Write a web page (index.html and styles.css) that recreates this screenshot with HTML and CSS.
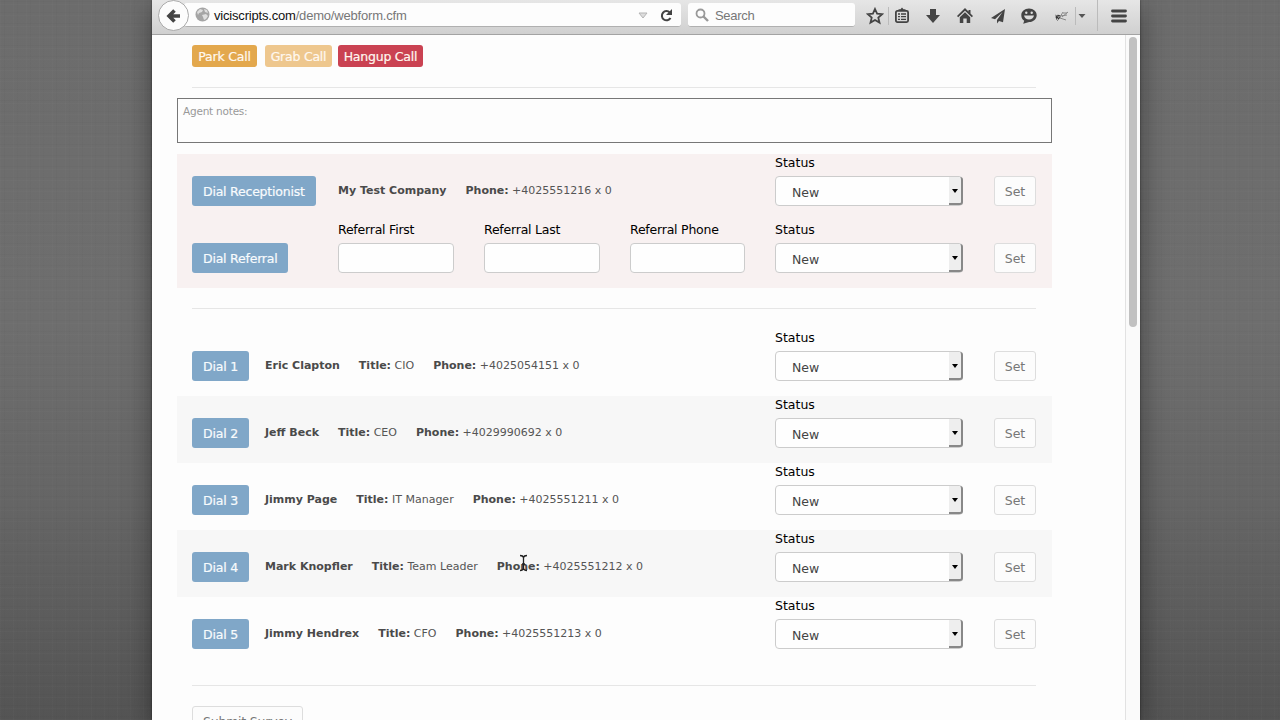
FILE: index.html
```html
<!DOCTYPE html>
<html lang="en">

<head>
  <meta charset="UTF-8">
  <meta name="viewport" content="width=device-width, initial-scale=1.0">
  <title>Webform</title>
  <link rel="stylesheet" href="styles.css">
</head>

<body>
  <div class="window">
    <div class="toolbar">
      <div class="back">
        <svg width="16" height="16" viewBox="0 0 16 16"><path d="M8.500 2.500 3 8l5.500 5.500M3.500 8H14" fill="none" stroke="#444" stroke-width="3.600" /></svg>
      </div>
      <div class="url">
        <svg class="globe" width="15" height="15" viewBox="0 0 15 15">
          <circle cx="7.500" cy="7.500" r="7" fill="#a5a5a5" />
          <path d="M2 5 5 2l3 1-1 2-3 1-1 2zM9 2l3 1 1 3-3-1zM7 8l4-1 2 2-2 3-2 1-1-3z" fill="#dedede" />
        </svg>
        <span class="address"><b>viciscripts.com</b>/demo/webform.cfm</span>
        <svg class="history" width="10" height="7" viewBox="0 0 10 7"><path d="M1 1h8L5 6z" fill="#ddd" stroke="#b5b5b5" /></svg>
        <svg class="reload" width="13" height="13" viewBox="0 0 13 13">
          <path d="M9.800 3.500A4.600 4.600 0 1 0 10.500 9" fill="none" stroke="#444" stroke-width="2" />
          <path d="M12 0v6H6z" fill="#444" />
        </svg>
      </div>
      <div class="search">
        <svg width="14" height="14" viewBox="0 0 14 14"><circle cx="5.500" cy="5.500" r="4" fill="none" stroke="#999" stroke-width="1.800" /><path d="m8.500 8.500 4.500 4.500" stroke="#999" stroke-width="2.400" /></svg>
        <span>Search</span>
      </div>
      <div class="icons">
        <svg width="18" height="18" viewBox="0 0 18 18"><path d="m9 2 2.100 4.700 5.100.5-3.900 3.400 1.200 5L9 13l-4.500 2.600 1.200-5-3.900-3.400 5.100-.5z" fill="none" stroke="#444" stroke-width="1.800" /></svg>
        <i class="sep"></i>
        <svg width="16" height="18" viewBox="0 0 16 18"><rect x="1.900" y="3.900" width="12.200" height="11.200" rx="1.500" fill="none" stroke="#444" stroke-width="1.800" /><path d="M4.500 4V2.300h2L8 .5l1.500 1.800h2V4z" fill="#444" /><path d="M4 7h2m1 0h5M4 9.700h2m1 0h5M4 12.400h2m1 0h5" stroke="#444" stroke-width="1.300" /></svg>
        <svg class="download" width="16" height="18" viewBox="0 0 16 18"><path d="M5 2h6v6h4l-7 8-7-8h4z" fill="#444" /></svg>
        <svg class="home" width="18" height="18" viewBox="0 0 18 18"><path d="M9 1 1 9l1.200 1.200L9 3.800l6.800 6.400L17 9l-2.500-2.500V3h-2v1.500z" fill="#444" /><path d="m9 5.300 5.200 5V16h-3.500v-4.500H7.300V16H3.800v-5.700z" fill="#444" /></svg>
        <svg class="plane" width="16" height="18" viewBox="0 0 16 18"><path d="M15 2 1 11l4 1.300L12.500 5 7 13v3.500L9 14l4 1.300z" fill="#444" /></svg>
        <svg class="smiley" width="18" height="18" viewBox="0 0 18 18"><path d="M9 1.500c4.500 0 7.700 3 7.700 6.700S13.500 15 9.200 15l-6 1.800 1-3C2.400 12.600 1.300 10.500 1.300 8.200 1.300 4.500 4.500 1.500 9 1.500z" fill="#444" /><circle cx="6.300" cy="5.800" r="1.200" fill="#ddd" /><circle cx="11.700" cy="5.800" r="1.200" fill="#ddd" /><path d="M4 8.500h10q-1 4-5 4t-5-4z" fill="#ddd" /></svg>
        <svg class="bug" width="16" height="14" viewBox="0 0 16 14"><ellipse cx="4" cy="8" rx="2.500" ry="2.200" fill="#333" /><path d="M1 6 6 8l3-5M2 11l4-4 7-1M3 12l3-3 6 2M8 8l6-5M9 4h4" fill="none" stroke="#888" stroke-width="1" /></svg>
        <i class="sep bug-sep"></i>
        <svg class="caret" width="8" height="6" viewBox="0 0 8 6"><path d="M.5 1h7L4 5z" fill="#555" /></svg>
        <i class="sep menu-sep"></i>
        <svg class="menu" width="16" height="14" viewBox="0 0 16 14"><path d="M1.500 2h13m-13 5h13m-13 5h13" stroke="#444" stroke-width="2.800" stroke-linecap="round" /></svg>
      </div>
    </div>

    <div class="viewport">
      <div class="page">
        <div class="calls">
          <button class="btn-sm park">Park Call</button>
          <button class="btn-sm grab">Grab Call</button>
          <button class="btn-sm hangup">Hangup Call</button>
        </div>
        <hr>
        <div class="notes">Agent notes:</div>

        <div class="company">
          <div class="row">
            <div class="who wide">
              <button class="btn">Dial Receptionist</button>
              <p class="info"><b>My Test Company</b><span><b>Phone:</b> +4025551216 x 0</span></p>
            </div>
            <div class="status"><label>Status</label><div class="select">New<i></i></div></div>
            <button class="btn set">Set</button>
          </div>
          <div class="row">
            <div class="who wide">
              <button class="btn">Dial Referral</button>
              <div class="field"><label>Referral First</label><input type="text"></div>
              <div class="field"><label>Referral Last</label><input type="text"></div>
              <div class="field"><label>Referral Phone</label><input type="text"></div>
            </div>
            <div class="status"><label>Status</label><div class="select">New<i></i></div></div>
            <button class="btn set">Set</button>
          </div>
        </div>
        <hr class="mid">

        <div class="contacts">
          <div class="row">
            <div class="who">
              <button class="btn dial">Dial 1</button>
              <p class="info"><b>Eric Clapton</b><span><b>Title:</b> CIO</span><span><b>Phone:</b> +4025054151 x 0</span></p>
            </div>
            <div class="status"><label>Status</label><div class="select">New<i></i></div></div>
            <button class="btn set">Set</button>
          </div>
          <div class="row">
            <div class="who">
              <button class="btn dial">Dial 2</button>
              <p class="info"><b>Jeff Beck</b><span><b>Title:</b> CEO</span><span><b>Phone:</b> +4029990692 x 0</span></p>
            </div>
            <div class="status"><label>Status</label><div class="select">New<i></i></div></div>
            <button class="btn set">Set</button>
          </div>
          <div class="row">
            <div class="who">
              <button class="btn dial">Dial 3</button>
              <p class="info"><b>Jimmy Page</b><span><b>Title:</b> IT Manager</span><span><b>Phone:</b> +4025551211 x 0</span></p>
            </div>
            <div class="status"><label>Status</label><div class="select">New<i></i></div></div>
            <button class="btn set">Set</button>
          </div>
          <div class="row">
            <div class="who">
              <button class="btn dial">Dial 4</button>
              <p class="info"><b>Mark Knopfler</b><span><b>Title:</b> Team Leader</span><span><b>Phone:</b> +4025551212 x 0</span></p>
            </div>
            <div class="status"><label>Status</label><div class="select">New<i></i></div></div>
            <button class="btn set">Set</button>
          </div>
          <div class="row">
            <div class="who">
              <button class="btn dial">Dial 5</button>
              <p class="info"><b>Jimmy Hendrex</b><span><b>Title:</b> CFO</span><span><b>Phone:</b> +4025551213 x 0</span></p>
            </div>
            <div class="status"><label>Status</label><div class="select">New<i></i></div></div>
            <button class="btn set">Set</button>
          </div>
        </div>
        <hr class="mid">
        <button class="btn set submit">Submit Survey</button>
      </div>
      <div class="scrollbar"><div class="thumb"></div></div>
    </div>
  </div>

  <svg class="cursor" width="9" height="18" viewBox="0 0 9 18"><path d="M1 1.500q3 0 3.500 2Q5 1.500 8 1.500M4.500 3v12M1 16.500q3 0 3.500-2 .5 2 3.500 2M3 10h3" fill="none" stroke="#222" stroke-width="1.300" /></svg>
</body>

</html>
```
FILE: styles.css
```css
* {
  box-sizing: border-box;
}

body {
  margin: 0;
  height: 720px;
  overflow: hidden;
  font-family: Verdana, "DejaVu Sans", sans-serif;
  font-size: 12.5px;
  letter-spacing: -0.22px;
  color: #000;
  background:
    repeating-linear-gradient(0deg, rgba(255, 255, 255, 0.015) 0 1px, transparent 1px 3px, rgba(0, 0, 0, 0.02) 3px 4px, transparent 4px 11px),
    repeating-linear-gradient(90deg, rgba(255, 255, 255, 0.015) 0 1px, transparent 1px 4px, rgba(0, 0, 0, 0.015) 4px 5px, transparent 5px 13px),
    linear-gradient(#6c6c6c, #6e6e6e 45%, #656565 70%, #545454);
}

.window {
  display: flex;
  flex-direction: column;
  width: 988px;
  height: 720px;
  margin-left: 152px;
  background: #fdfdfd;
  box-shadow: 0 8px 26px rgba(0, 0, 0, 0.4), 0 0 2px rgba(0, 0, 0, 0.5);
}

/* browser toolbar */
.toolbar {
  display: flex;
  height: 35px;
  border-bottom: 1px solid #a3a3a3;
  background: linear-gradient(#e6e6e6, #d0d0d0);
  font-family: "Liberation Sans", Arial, sans-serif;
}

.back {
  display: flex;
  align-items: center;
  justify-content: center;
  z-index: 1;
  width: 31px;
  height: 31px;
  margin-left: 6px;
  border: 1px solid #aaa;
  border-radius: 50%;
  background: #fcfcfc;
}

.url,
.search {
  display: flex;
  align-items: center;
  height: 24px;
  margin-top: 3px;
  border-bottom: 1px solid #b0b0b0;
  border-radius: 3px;
  background: #fdfdfd;
}

.url {
  width: 497px;
  margin-left: -5px;
  padding: 0 8px 0 11px;
}

.address {
  flex: 1;
  margin-left: 4px;
  padding-top: 2px;
  font-size: 13px;
  letter-spacing: -0.19px;
  color: #777;
}

.address b {
  font-weight: normal;
  color: #111;
}

.history {
  margin: 1px 12px 0 0;
}

.reload {
  margin-top: 1px;
}

.search {
  width: 167px;
  margin-left: 7px;
  padding-left: 7px;
  font-size: 13px;
  letter-spacing: -0.3px;
  color: #777;
}

.search span {
  margin-left: 6px;
  padding-top: 2px;
}

.icons {
  display: flex;
  align-items: center;
  height: 31px;
  margin-left: 11px;
}

.sep {
  width: 1px;
  height: 18px;
  margin: 0 5px 0 4px;
  background: #bbb;
}

.download {
  margin-left: 15px;
}

.home {
  margin-left: 15px;
}

.plane {
  margin-left: 16px;
}

.smiley {
  margin-left: 14px;
}

.bug {
  margin-left: 16px;
}

.bug-sep {
  margin: 0 2px 0 5px;
}

.menu-sep {
  height: 31px;
  margin: 0 13px 0 11px;
}

/* page */
.viewport {
  display: flex;
  flex: 1;
  min-height: 0;
}

.page {
  width: 973px;
  padding: 10px 73px 0 25px;
}

.scrollbar {
  width: 15px;
  padding: 2px 3px;
  border-left: 1px solid #e2e2e2;
  background: #fafafa;
}

.thumb {
  width: 8px;
  height: 290px;
  border-radius: 4px;
  background: #c1c1c1;
}

hr {
  height: 1px;
  margin: 20px 16px 10px 15px;
  border: 0;
  background: #e6e6e6;
}

hr.mid {
  margin: 20px 16px 20px 15px;
}

button {
  flex: none;
  font-family: inherit;
  font-size: inherit;
  letter-spacing: inherit;
}

.calls {
  display: flex;
  padding-left: 15px;
}

.btn-sm {
  height: 22px;
  padding: 1px 0 0;
  border: 0;
  border-radius: 3px;
  color: #fff8f0;
  -webkit-text-stroke: 0.2px;
}

.park {
  width: 65px;
  background: #e3a84d;
}

.grab {
  width: 67px;
  margin-left: 8px;
  background: #eec78e;
}

.hangup {
  width: 85px;
  margin-left: 6px;
  background: #ca4252;
}

.notes {
  height: 45px;
  margin-bottom: 11px;
  padding: 6px 5px;
  border: 1px solid #777;
  font-size: 10.5px;
  color: #999;
}

.company {
  background: #f8f1f1;
}

.row {
  display: flex;
  height: 67px;
  padding: 0 16px 0 15px;
}

.contacts {
  margin-bottom: 21px;
}

.contacts .row:nth-child(even) {
  background: #f7f7f7;
}

.who {
  display: flex;
  width: 583px;
}

.btn {
  height: 30px;
  margin-top: 22px;
  padding: 0 11px;
  border: 0;
  border-radius: 3px;
  background: #80a7c8;
  color: #f8fbfd;
  -webkit-text-stroke: 0.2px;
}

.dial {
  width: 57px;
}

.info {
  display: flex;
  gap: 19px;
  margin: 30px 0 0 16px;
  font-size: 11px;
  line-height: 14px;
  letter-spacing: 0;
  color: #555;
  white-space: nowrap;
}

.info b {
  color: #4a4a4a;
}

.wide .btn {
  margin-right: auto;
}

.wide .info {
  width: 437px;
  margin-left: 0;
}

.field {
  width: 116px;
  margin-right: 30px;
}

.field:last-child {
  width: 115px;
}

label {
  display: block;
  height: 22px;
  line-height: 17px;
}

.status label,
.select,
.set {
  letter-spacing: 0;
}

input,
.select {
  display: block;
  width: 100%;
  height: 30px;
  border: 1px solid #ccc;
  border-radius: 4px;
  background: #fefefe;
}

.status {
  width: 188px;
  margin-right: 31px;
}

.select {
  display: flex;
  justify-content: space-between;
  padding-left: 16px;
  line-height: 31px;
  color: #444;
}

.select i {
  display: flex;
  align-items: center;
  justify-content: center;
  width: 14px;
  margin-right: -1px;
  padding-top: 2px;
  border-right: 2px solid #888;
  border-bottom: 2px solid #888;
  border-radius: 0 3px 3px 0;
  background: #eee;
}

.select i::before {
  content: "";
  border: 3px solid transparent;
  border-top: 4px solid #000;
  border-bottom: 0;
}

.set {
  width: 42px;
  padding: 0;
  border: 1px solid #ddd;
  background: #fcfcfc;
  color: #777;
  -webkit-text-stroke: 0;
}

.submit {
  width: 111px;
  margin: 0 0 0 15px;
  letter-spacing: -0.22px;
}

/* text pointer over the page */
.cursor {
  position: absolute;
  left: 519px;
  top: 554px;
}
```
